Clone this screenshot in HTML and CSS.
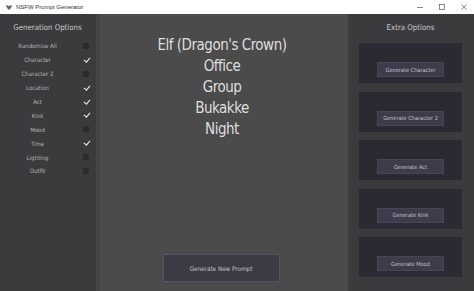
FILE: index.html
```html
<!DOCTYPE html>
<html>
<head>
<meta charset="utf-8">
<link rel="stylesheet" href="styles.css">
</head>
<body>
<div class="window">
  <div class="titlebar">
    <div class="tb-left">
      <svg class="app-icon" width="8" height="7" viewBox="0 0 8 7"><path d="M1 1 L4 2 L7 1 L6 4 L4 6 L2 4 Z" fill="#666"/></svg>
      <span class="tb-title">NSFW Prompt Generator</span>
    </div>
    <div class="tb-controls">
      <svg width="8" height="8" viewBox="0 0 8 8"><line x1="1" y1="4.5" x2="7" y2="4.5" stroke="#555" stroke-width="0.7"/></svg>
      <svg width="8" height="8" viewBox="0 0 8 8"><rect x="1.5" y="1.5" width="5" height="5" fill="none" stroke="#555" stroke-width="0.7"/></svg>
      <svg width="8" height="8" viewBox="0 0 8 8"><path d="M1.5 1.5 L6.5 6.5 M6.5 1.5 L1.5 6.5" stroke="#555" stroke-width="0.7"/></svg>
    </div>
  </div>
  <div class="main">
    <div class="left">
      <div class="panel-title">Generation Options</div>
      <div class="opts">
        <div class="opt"><span class="lbl">Randomise All</span><span class="cb"></span></div>
        <div class="opt"><span class="lbl">Character</span><span class="cb on"></span></div>
        <div class="opt"><span class="lbl">Character 2</span><span class="cb"></span></div>
        <div class="opt"><span class="lbl">Location</span><span class="cb on"></span></div>
        <div class="opt"><span class="lbl">Act</span><span class="cb on"></span></div>
        <div class="opt"><span class="lbl">Kink</span><span class="cb on"></span></div>
        <div class="opt"><span class="lbl">Mood</span><span class="cb"></span></div>
        <div class="opt"><span class="lbl">Time</span><span class="cb on"></span></div>
        <div class="opt"><span class="lbl">Lighting</span><span class="cb"></span></div>
        <div class="opt"><span class="lbl">Outfit</span><span class="cb"></span></div>
      </div>
    </div>
    <div class="center">
      <div class="prompt">
        <div>Elf (Dragon's Crown)</div>
        <div>Office</div>
        <div>Group</div>
        <div>Bukakke</div>
        <div>Night</div>
      </div>
      <button class="big-btn">Generate New Prompt</button>
    </div>
    <div class="right">
      <div class="panel-title">Extra Options</div>
      <div class="cards">
        <div class="card"><button class="sm-btn">Generate Character</button></div>
        <div class="card"><button class="sm-btn">Generate Character 2</button></div>
        <div class="card"><button class="sm-btn">Generate Act</button></div>
        <div class="card"><button class="sm-btn">Generate Kink</button></div>
        <div class="card"><button class="sm-btn">Generate Mood</button></div>
      </div>
    </div>
  </div>
</div>
</body>
</html>
```

FILE: styles.css
```css
* { box-sizing: border-box; }
html, body { margin: 0; padding: 0; }
body {
  width: 474px;
  height: 291px;
  overflow: hidden;
  font-family: "DejaVu Sans Condensed", "DejaVu Sans", sans-serif;
  background: #4b4b4b;
}
.window { width: 474px; height: 291px; display: flex; flex-direction: column; }
.titlebar {
  height: 14px;
  background: #ffffff;
  display: flex;
  align-items: center;
  justify-content: space-between;
  padding: 0 6px 0 5px;
}
.tb-left { display: flex; align-items: center; gap: 3px; }
.tb-title { font-family: "Liberation Sans", sans-serif; font-size: 6px; color: #333; }
.tb-controls { display: flex; gap: 14px; align-items: center; }
.main { flex: 1; display: flex; }
.left {
  width: 96px;
  background: #3b3b3d;
  display: flex;
  flex-direction: column;
}
.panel-title {
  color: #c9c9cc;
  font-size: 7.8px;
  text-align: center;
  padding-top: 9px;
  height: 24px;
}
.left .panel-title { padding-right: 1px; }
.opts { display: flex; flex-direction: column; padding-top: 1px; }
.opt {
  height: 13.9px;
  display: flex;
  align-items: center;
}
.lbl {
  width: 75px;
  text-align: center;
  color: #b2b2b5;
  font-size: 6px;
}
.cb {
  margin-left: 8px;
  width: 6px;
  height: 6px;
  background: #2b2b2d;
  position: relative;
}
.cb.on { background: transparent; }
.cb.on::after {
  content: "";
  position: absolute;
  left: 1.5px;
  top: -1px;
  width: 2.5px;
  height: 5px;
  border-right: 1.4px solid #f2f2f2;
  border-bottom: 1.4px solid #f2f2f2;
  transform: rotate(40deg);
}
.center {
  width: 252px;
  background: #4b4b4b;
  border-left: 4px solid #444446;
  display: flex;
  flex-direction: column;
  align-items: center;
  justify-content: space-between;
  padding: 21px 0 9px 0;
}
.prompt {
  margin-left: -4px;
  color: #dedede;
  font-size: 15px;
  letter-spacing: -0.5px;
  line-height: 21px;
  text-align: center;
}
.big-btn {
  margin-left: -6px;
  width: 117px;
  height: 28px;
  background: #3b3a45;
  border: 1px solid #565660;
  color: #c4c4c8;
  font-family: inherit;
  font-size: 6.3px;
  padding: 0;
}
.right {
  width: 126px;
  background: #3b3b3d;
  display: flex;
  flex-direction: column;
  padding: 0 12px 0 11px;
}
.right .panel-title { padding-top: 9px; height: 29px; }
.cards { display: flex; flex-direction: column; gap: 8.5px; }
.card {
  height: 40px;
  background: #2a2a32;
  display: flex;
  justify-content: center;
  align-items: flex-end;
  padding-bottom: 6px;
}
.sm-btn {
  width: 67px;
  height: 15px;
  background: #3d3c4a;
  border: 1px solid #46455a;
  color: #c2c2c8;
  font-family: inherit;
  font-size: 5.6px;
  padding: 0;
}
```
